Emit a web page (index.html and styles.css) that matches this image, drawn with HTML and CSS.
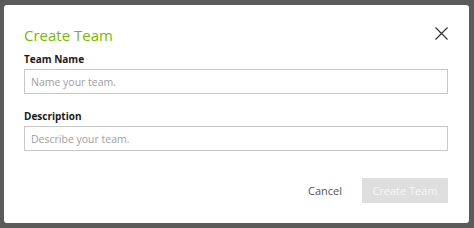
FILE: index.html
```html
<!DOCTYPE html>
<html>
<head>
<meta charset="utf-8">
<link rel="stylesheet" href="styles.css">
</head>
<body>
<div class="dialog">
  <div class="header">
    <h1 class="title">Create Team</h1>
    <button class="close" aria-label="Close">
      <svg width="13" height="13" viewBox="0 0 13 13"><path d="M0.5 0.5L12.5 12.5M12.5 0.5L0.5 12.5" stroke="#333" stroke-width="1.2" fill="none"/></svg>
    </button>
  </div>
  <div class="field">
    <label class="label">Team Name</label>
    <input class="input" type="text" placeholder="Name your team.">
  </div>
  <div class="field">
    <label class="label">Description</label>
    <input class="input" type="text" placeholder="Describe your team.">
  </div>
  <div class="footer">
    <button class="cancel">Cancel</button>
    <button class="create" disabled>Create Team</button>
  </div>
</div>
</body>
</html>
```
FILE: styles.css
```css
html, body {
  margin: 0;
  padding: 0;
}
body {
  background: #5b5b5b;
  width: 474px;
  height: 228px;
  overflow: hidden;
  font-family: "Open Sans", "DejaVu Sans", sans-serif;
}
.dialog {
  box-sizing: border-box;
  margin: 5px 0 0 4px;
  width: 465px;
  height: 218px;
  background: #fff;
  border-radius: 3px;
  padding: 0 21px 0 20px;
  display: flex;
  flex-direction: column;
}
.header {
  display: flex;
  align-items: flex-start;
  justify-content: space-between;
  height: 47px;
  padding-top: 20px;
  box-sizing: border-box;
}
.title {
  margin: 0;
  font-size: 15px;
  font-weight: 400;
  color: #76b900;
  line-height: 20px;
}
.close {
  border: 0;
  background: none;
  padding: 0;
  margin: 2px 0 0;
  width: 13px;
  height: 13px;
  display: flex;
}
.field {
  display: flex;
  flex-direction: column;
}
.field + .field {
  margin-top: 15px;
}
.label {
  font-size: 10px;
  font-weight: 700;
  color: #1a1a1a;
  line-height: 14px;
  margin-bottom: 3px;
}
.input {
  box-sizing: border-box;
  height: 25px;
  width: 100%;
  border: 1px solid #c8c8c8;
  border-radius: 0;
  padding: 0 6px;
  font-family: inherit;
  font-size: 10.5px;
  color: #333;
  outline: none;
}
.input::placeholder {
  color: #a0a0a0;
}
.footer {
  display: flex;
  justify-content: flex-end;
  align-items: center;
  margin-top: 27px;
  gap: 20px;
}
.cancel {
  border: 0;
  background: none;
  font-family: inherit;
  font-size: 11px;
  color: #555;
  padding: 0;
}
.create {
  border: 0;
  background: #dedede;
  color: #f6f6f6;
  font-family: inherit;
  font-size: 11px;
  width: 86px;
  height: 25px;
  padding: 0;
}
```
